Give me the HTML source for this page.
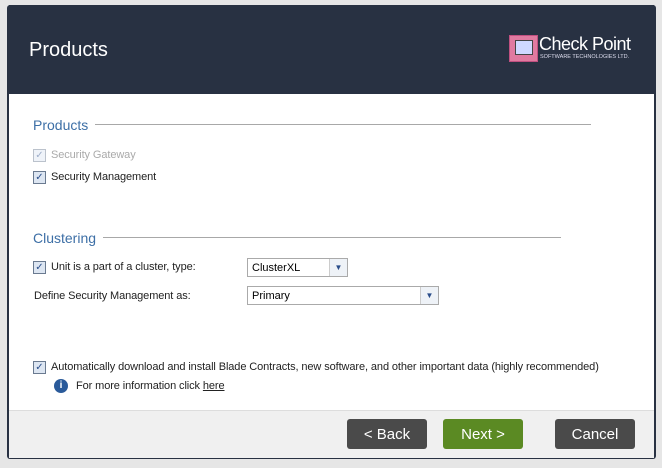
<!DOCTYPE html>
<html><head><style>
body{margin:0;width:662px;height:468px;background:#e6e6e6;font-family:"Liberation Sans",sans-serif;position:relative;overflow:hidden}
.win{position:absolute;left:7px;top:5px;width:645px;height:452px;border:2px solid #283142;border-top:0;background:#fff;border-radius:3px}
.hdr{position:absolute;left:0;top:0;width:645px;height:89px;background:#283142}
.hdr h1{position:absolute;left:20px;top:34px;margin:0;font-weight:normal;color:#fff;font-size:20px}
.abs{position:absolute}
.sec{color:#3d6fa6;font-size:14px}
.line{position:absolute;height:1px;background:#a8a8a8}
.t{font-size:11px;letter-spacing:-0.1px;color:#222;position:absolute;white-space:nowrap}
.cb{position:absolute;width:11px;height:11px;border:1px solid #6a7a90;background:#dde6f2;font-size:10px;line-height:11px;text-align:center;color:#2a4d8a}
.dd{position:absolute;height:19px;border:1px solid #aaa;background:#fff;font-size:11px;line-height:19px;padding-left:4px;box-sizing:border-box}
.dd b{position:absolute;right:0;top:0;width:17px;height:17px;border-left:1px solid #ccc;background:#eef2f7;font-size:8px;text-align:center;line-height:17px;color:#2a4d8a;font-weight:normal}
.foot{position:absolute;left:0;top:405px;width:645px;height:47px;background:#f0f0f0;border-top:1px solid #ddd}
.btn{position:absolute;top:414px;width:80px;height:30px;border-radius:3px;color:#fff;font-size:15px;text-align:center;line-height:31px}
</style></head><body>
<div class="win">
<div class="hdr"><h1>Products</h1>
<div class="abs" style="left:500px;top:30px;width:27px;height:25px;background:#e07aa0;border:1px solid #c05080"><div style="margin:4px 5px;width:16px;height:13px;background:#cfd8ff;border:1px solid #444"></div></div>
<div class="abs" style="left:530px;top:29px;color:#fff;font-size:18px;letter-spacing:-0.5px">Check Point</div>
<div class="abs" style="left:531px;top:49px;color:#dde;font-size:5.5px">SOFTWARE TECHNOLOGIES LTD.</div>
</div>
<div class="sec abs" style="left:24px;top:112px">Products</div>
<div class="line" style="left:86px;top:119px;width:496px"></div>
<div class="cb" style="left:24px;top:144px;opacity:.45">✓</div>
<div class="t" style="left:42px;top:144px;color:#aaa">Security Gateway</div>
<div class="cb" style="left:24px;top:166px">✓</div>
<div class="t" style="left:42px;top:166px">Security Management</div>
<div class="sec abs" style="left:24px;top:225px">Clustering</div>
<div class="line" style="left:94px;top:232px;width:458px"></div>
<div class="cb" style="left:24px;top:256px">✓</div>
<div class="t" style="left:42px;top:256px">Unit is a part of a cluster, type:</div>
<div class="dd" style="left:238px;top:253px;width:101px">ClusterXL<b>▼</b></div>
<div class="t" style="left:25px;top:285px">Define Security Management as:</div>
<div class="dd" style="left:238px;top:281px;width:192px">Primary<b>▼</b></div>
<div class="cb" style="left:24px;top:356px">✓</div>
<div class="t" style="left:42px;top:356px">Automatically download and install Blade Contracts, new software, and other important data (highly recommended)</div>
<div class="abs" style="left:45px;top:374px;width:14px;height:14px;border-radius:50%;background:#2a5a9a;color:#fff;font-size:10px;font-weight:bold;text-align:center;line-height:14px">i</div>
<div class="t" style="left:67px;top:375px">For more information click <u>here</u></div>
<div class="foot"></div>
<div class="btn" style="left:338px;background:#4a4a4a">&lt; Back</div>
<div class="btn" style="left:434px;background:#5b8a23">Next &gt;</div>
<div class="btn" style="left:546px;background:#4a4a4a">Cancel</div>
</div>
</body></html>
